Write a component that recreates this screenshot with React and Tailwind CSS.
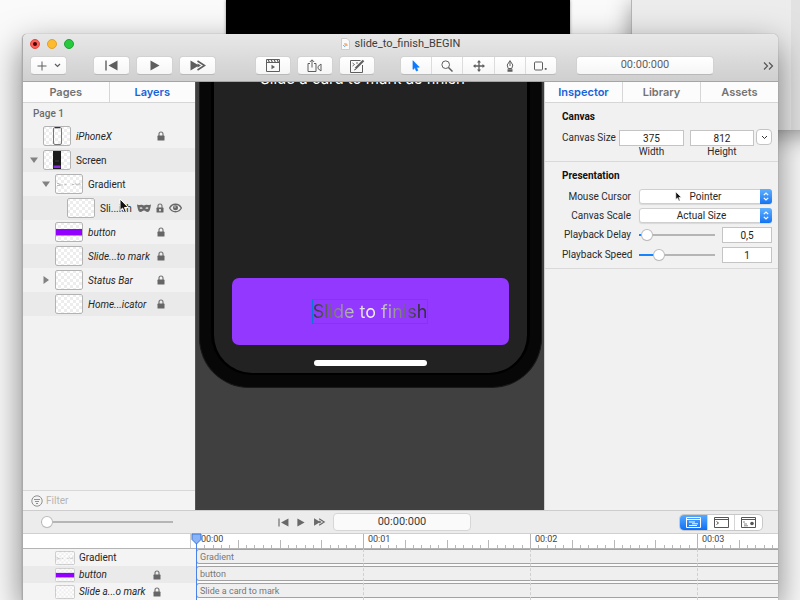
import React from "react";

const toolButton =
  "flex h-[19px] shrink-0 items-center justify-center rounded-[4px] border border-[#d2d2d2] border-b-[#b9b9b9] bg-gradient-to-b from-white to-[#f6f6f6] text-[#5e5e5e]";
const rangeBase =
  "h-[12px] shrink-0 appearance-none bg-no-repeat bg-center bg-[length:100%_2px] [&::-webkit-slider-thumb]:appearance-none [&::-webkit-slider-thumb]:size-[10px] [&::-webkit-slider-thumb]:rounded-full [&::-webkit-slider-thumb]:bg-white [&::-webkit-slider-thumb]:shadow-[0_0_0_1px_#bdbdbd,0_1px_1px_#00000033]";
const field =
  "h-[16px] border border-[#c4c4c4] bg-white text-center text-[10px] leading-[14px] text-[#222] outline-none";

function Lock({ locked = true }) {
  return (
    <svg width="8" height="10" viewBox="0 0 8 10" fill="none">
      <path d="M2 5V3a2 2 0 0 1 4 0v2" stroke="#707070" strokeWidth="1.1" />
      <rect x="0.5" y="4.6" width="7" height="5" rx="0.6" fill="#666" />
      {!locked && <rect x="3.2" y="6" width="1.6" height="2.2" fill="#eee" />}
    </svg>
  );
}

function Mask() {
  return (
    <svg width="14" height="9" viewBox="0 0 14 9">
      <path
        fillRule="evenodd"
        fill="#686868"
        d="M0 .6c2 .9 3.300-.2 5 .2.8.2 1.100.6 2 .6s1.200-.4 2-.6c1.700-.4 3 .7 5-.2-.2 1.700-.5 3-.9 4.400C12.700 6.900 11.800 8 10.500 8 9 8 8.300 6.500 7 6.500S5 8 3.500 8C2.200 8 1.300 6.900.9 5 .5 3.600.2 2.300 0 .6ZM2.500 4c.6-1.100 2.400-1.100 3.200.2-.8.9-2.600.9-3.200-.2Zm9 0c-.6-1.100-2.400-1.100-3.200.2.8.9 2.600.9 3.200-.2Z"
      />
    </svg>
  );
}

function Eye() {
  return (
    <svg width="13" height="10" viewBox="0 0 13 10" fill="none">
      <path d="M.6 5C3.200 0 9.800 0 12.400 5 9.800 10 3.200 10 .6 5Z" stroke="#686868" strokeWidth="1.300" />
      <circle cx="6.500" cy="4.800" r="2.500" fill="#686868" />
      <circle cx="6" cy="4" r=".7" fill="#eee" />
    </svg>
  );
}

function Cursor({ className, width = 10, height = 16, fill = "#111", outline = "#fff" }) {
  return (
    <svg className={className} width={width} height={height} viewBox="0 0 10 16">
      <path
        d="M1 1v11.500l2.600-2.400 1.900 4.600 1.900-.8-1.900-4.400H9.300Z"
        fill={fill}
        stroke={outline}
        strokeWidth="1"
      />
    </svg>
  );
}

function Thumb({ kind, small }) {
  return (
    <svg
      className="shrink-0 rounded-[2px]"
      width={small ? 20 : 28}
      height={small ? 14 : 20}
      viewBox="0 0 28 20"
      preserveAspectRatio="none"
    >
      <defs>
        <pattern id="checks" width="6" height="6" patternUnits="userSpaceOnUse">
          <rect width="6" height="6" fill="#fff" />
          <rect width="3" height="3" fill="#ededed" />
          <rect x="3" y="3" width="3" height="3" fill="#ededed" />
        </pattern>
      </defs>
      <rect width="28" height="20" fill="url(#checks)" />
      {kind === "phone" && (
        <>
          <rect x="10.500" y="1.500" width="8" height="17" rx="1.500" fill="none" stroke="#777" strokeWidth="1" />
          <path d="M12 1.500h5" stroke="#333" strokeWidth="1.500" />
        </>
      )}
      {kind === "screen" && (
        <>
          <rect x="10" y="1" width="8" height="18" fill="#191919" />
          <rect x="10.500" y="15.500" width="7" height="2.500" fill="#8a2be8" />
          <path d="M12 11h4" stroke="#555" strokeWidth=".6" />
        </>
      )}
      {kind === "gradient" && (
        <path
          d="M2 9.500h2l1 1.500h3M9.500 10.500h2M17 10.500h2l1-1 2 1.500 3-1.500v2M2 11.500h3"
          fill="none"
          stroke="#bdbdbd"
          strokeWidth="1"
        />
      )}
      {kind === "button" && <rect x="1" y="7" width="26" height="6.500" fill="#9100ff" />}
      <rect x=".5" y=".5" width="27" height="19" rx="1.500" fill="none" stroke="#b3b3b3" />
    </svg>
  );
}

const layers = [
  { name: "iPhoneX", kind: "phone", italic: true, pad: "pl-[20px]", lock: true },
  { name: "Screen", kind: "screen", pad: "pl-[7px]", open: true },
  { name: "Gradient", kind: "gradient", pad: "pl-[19px]", open: true },
  { name: "Sli...ish", pad: "pl-[44px]", hover: true },
  { name: "button", kind: "button", italic: true, pad: "pl-[32px]", lock: true },
  { name: "Slide...to mark", italic: true, pad: "pl-[32px]", lock: true },
  { name: "Status Bar", italic: true, pad: "pl-[19px]", closed: true, lock: true },
  { name: "Home...icator", italic: true, pad: "pl-[32px]", lock: true },
];

function LayerRow({ layer }) {
  return (
    <li className={`flex h-[24px] items-center even:bg-[#eaeaea] ${layer.pad}`}>
      {(layer.open || layer.closed) && (
        <button className="mr-[5px] flex w-[8px] justify-center" aria-label={layer.name}>
          <svg width="8" height="8" viewBox="0 0 8 8">
            <path d={layer.open ? "M0 1.500h8L4 7Z" : "M1.500 0v8L7 4Z"} fill="#828282" />
          </svg>
        </button>
      )}
      <Thumb kind={layer.kind} />
      <span className={`ml-[5px] grow whitespace-nowrap text-[10px] text-[#262626] ${layer.italic ? "italic" : ""}`}>
        {layer.name}
      </span>
      {layer.hover && (
        <div className="flex items-center gap-[5px] pr-[13px]">
          <button aria-label="Mask"><Mask /></button>
          <button aria-label="Lock"><Lock locked={false} /></button>
          <button aria-label="Visible"><Eye /></button>
        </div>
      )}
      {layer.lock && (
        <button className="mr-[30px]" aria-label="Locked"><Lock /></button>
      )}
    </li>
  );
}

function Rewind({ size = 11 }) {
  return (
    <svg width={size + 2} height={size} viewBox="0 0 13 11">
      <path d="M1 .5v10" stroke="currentColor" strokeWidth="1.400" />
      <path d="M12.500 .5v10L3.500 5.500Z" fill="currentColor" />
    </svg>
  );
}

function Play({ size = 11 }) {
  return (
    <svg width={size - 1} height={size} viewBox="0 0 10 11">
      <path d="M.5.500v10L9.500 5.500Z" fill="currentColor" />
    </svg>
  );
}

function FastForward({ size = 11 }) {
  return (
    <svg width={size + 5} height={size} viewBox="0 0 16 11">
      <path d="M.5.500v10L9 5.500Z" fill="currentColor" />
      <path d="M7.500 1l7 4.500-7 4.500" stroke="currentColor" strokeWidth="1.600" fill="none" />
      <path d="M7.500 3.500v4l3.500-2Z" fill="currentColor" />
    </svg>
  );
}

function Toolbar() {
  return (
    <header className="h-[48px] shrink-0 rounded-t-[5px] border-b border-[#a5a5a5] bg-gradient-to-b from-[#e8e8e8] to-[#cfcfcf]">
      <div className="grid h-[20px] grid-cols-3 items-center">
        <div className="flex gap-[7px] pl-[7px]">
          <button className="flex size-[10px] items-center justify-center rounded-full border border-[#de4a42] bg-[#fb5f57]" aria-label="Close">
            <span className="size-[4px] rounded-full bg-[#4d0000]" />
          </button>
          <button className="size-[10px] rounded-full border border-[#e0a02c] bg-[#fdbc2f]" aria-label="Minimize" />
          <button className="size-[10px] rounded-full border border-[#1fa32f] bg-[#27c93f]" aria-label="Zoom" />
        </div>
        <h1 className="flex items-center justify-center gap-[5px] text-[11px] leading-[14px] text-[#3d3d3d]">
          <svg width="9" height="12" viewBox="0 0 9 12">
            <path d="M.5.500h5.500l2.500 2.500v8.500h-8Z" fill="#fafafa" stroke="#c4c4c4" strokeWidth=".8" />
            <path d="M3 5l3 .5 1 2-3 1Z" fill="#f3b37c" />
            <path d="M2 7l2 2" stroke="#78b6e3" />
          </svg>
          slide_to_finish_BEGIN
        </h1>
      </div>
      <div className="flex items-center pl-[7px] pt-[2px]">
        <button className={`${toolButton} w-[37px] gap-[7px]`} aria-label="Add">
          <svg width="10" height="10" viewBox="0 0 10 10"><path d="M5 .5v9M.5 5h9" stroke="currentColor" strokeWidth="1" /></svg>
          <svg width="7" height="5" viewBox="0 0 7 5"><path d="M1 1l2.500 2.500L6 1" stroke="currentColor" fill="none" strokeWidth="1.200" /></svg>
        </button>
        <div className="ml-[26px] flex gap-[6px]">
          <button className={`${toolButton} w-[37px]`} aria-label="Rewind"><Rewind /></button>
          <button className={`${toolButton} w-[37px]`} aria-label="Play"><Play /></button>
          <button className={`${toolButton} w-[37px]`} aria-label="Fast forward"><FastForward /></button>
        </div>
        <div className="ml-[39px] flex gap-[6px]">
          <button className={`${toolButton} w-[36px]`} aria-label="Preview">
            <svg width="14" height="13" viewBox="0 0 14 13" fill="none" stroke="currentColor">
              <path d="M.5.500h13v12H.5ZM.5 3.500h13" />
              <path d="M2 .5l1.500 3M5 .5l1.500 3M8 .5l1.500 3M11 .5l1.500 3" strokeWidth="1.200" />
              <path d="M5.500 5.800v4.500L9 8Z" fill="currentColor" stroke="none" />
            </svg>
          </button>
          <button className={`${toolButton} w-[36px]`} aria-label="Export video">
            <svg width="16" height="13" viewBox="0 0 16 13" fill="none" stroke="currentColor">
              <path d="M3 4.500H1v8h8v-8H7M5 8.500V1M2.800 3L5 .8 7.200 3" />
              <path d="M11 7.500l3-2.500v7l-3-2.500Z" />
            </svg>
          </button>
          <button className={`${toolButton} w-[36px]`} aria-label="Edit">
            <svg width="15" height="14" viewBox="0 0 15 14" fill="none" stroke="currentColor">
              <path d="M10.500 1.500h-10v12h12V6" />
              <path d="M5.500 9.500L13.500 1.500" strokeWidth="2.200" />
              <path d="M4 11l2-.7M2.500 4l2 1.500-2 1.500M6 4h2" strokeWidth=".9" />
            </svg>
          </button>
        </div>
        <div className={`${toolButton} ml-[25px] w-[157px] divide-x divide-[#dcdcdc]`}>
          <button className="flex h-full flex-1 items-center justify-center" aria-label="Select">
            <Cursor width={8} height={12} fill="#0a7aff" outline="#0a7aff" />
          </button>
          <button className="flex h-full flex-1 items-center justify-center" aria-label="Magnify">
            <svg width="12" height="12" viewBox="0 0 12 12" fill="none" stroke="currentColor"><circle cx="4.700" cy="4.700" r="3.800" /><path d="M7.500 7.500l4 4" strokeWidth="1.500" /></svg>
          </button>
          <button className="flex h-full flex-1 items-center justify-center" aria-label="Move">
            <svg width="12" height="12" viewBox="0 0 12 12">
              <path d="M6 1v10M1 6h10" stroke="currentColor" strokeWidth="1.300" />
              <path d="M6 0l2 2.500H4ZM6 12l2-2.500H4ZM0 6l2.500-2v4ZM12 6L9.500 4v4Z" fill="currentColor" />
            </svg>
          </button>
          <button className="flex h-full flex-1 items-center justify-center" aria-label="Pen">
            <svg width="8" height="12" viewBox="0 0 8 12" fill="none" stroke="currentColor">
              <path d="M4 .6L1.200 5l1 3.500h3.600l1-3.500Z" /><path d="M4 2v4" /><path d="M1.500 10.500h5" strokeWidth="2.500" />
            </svg>
          </button>
          <button className="flex h-full flex-1 items-center justify-center" aria-label="Shape">
            <svg width="13" height="10" viewBox="0 0 13 10"><rect x=".5" y="1" width="8" height="8" rx="1" fill="none" stroke="currentColor" /><rect x="10.800" y="7" width="1.800" height="1.800" fill="currentColor" /></svg>
          </button>
        </div>
        <output className={`${toolButton} ml-[19px] w-[138px] text-[11px] text-[#3c3c3c]`}>00:00:000</output>
        <button className="ml-auto mr-[4px] text-[#555]" aria-label="More">
          <svg width="11" height="8" viewBox="0 0 11 8" fill="none" stroke="currentColor" strokeWidth="1.200"><path d="M1 .5L4.500 4 1 7.500M6 .5L9.500 4 6 7.500" /></svg>
        </button>
      </div>
    </header>
  );
}

function Tabs({ names, active }) {
  return (
    <nav className="flex h-[21px] shrink-0 divide-x divide-[#d6d6d6] border-b border-[#d6d6d6] bg-[#fcfcfc] font-[Inter,sans-serif] text-[11px] font-semibold">
      {names.map((n) => (
        <button key={n} className={`flex-1 ${n === active ? "text-[#1763d8]" : "text-[#737373]"}`}>{n}</button>
      ))}
    </nav>
  );
}

function Sidebar() {
  return (
    <aside className="relative flex w-[172px] shrink-0 flex-col bg-[#f2f2f2]">
      <Tabs names={["Pages", "Layers"]} active="Layers" />
      <h2 className="pl-[10px] text-[10px] font-medium leading-[21px] text-[#6b6b6b]">Page 1</h2>
      <ul>{layers.map((l) => <LayerRow key={l.name} layer={l} />)}</ul>
      <Cursor className="absolute left-[96px] top-[116px]" />
      <label className="mt-auto flex h-[20px] items-center gap-[3px] border-t border-[#d8d8d8] bg-[#f4f4f4] pl-[8px]">
        <svg width="12" height="12" viewBox="0 0 12 12" fill="none" stroke="#8f8f8f">
          <circle cx="6" cy="6" r="5.200" /><path d="M3 4.500h6M4 6.500h4M5 8.500h2" />
        </svg>
        <input className="w-[120px] bg-transparent text-[10px] outline-none placeholder:text-[#b5b5b5]" placeholder="Filter" />
      </label>
    </aside>
  );
}

function Canvas() {
  return (
    <main className="min-w-0 flex-1 overflow-hidden border-l border-[#555] bg-[#404040] font-[Inter,sans-serif]">
      <div className="mx-auto flex h-[306px] w-[343px] flex-col rounded-b-[50px] border-x border-b border-[#191919] bg-[#070707] px-[11px] pb-[12px]">
        <div className="flex grow flex-col rounded-b-[41px] bg-black px-[3px] pb-[2px]">
          <div className="flex grow flex-col items-center rounded-b-[38px] bg-[#222] px-[18px] pb-[7px]">
            <p className="-mt-[13px] pr-[15px] text-[15px] leading-[20px] text-white">Slide a card to mark as finish</p>
            <button className="mt-auto flex h-[67px] w-full items-center justify-center rounded-[7px] bg-[#9338ff]">
              <span className="border border-[#0a78d6]">
                <span className="block bg-[linear-gradient(90deg,#333_0%,#555_10%,#aaa_30%,#fff_50%,#aaa_68%,#333_92%)] bg-clip-text text-[18px] leading-[23px] text-transparent">
                  Slide to finish
                </span>
              </span>
            </button>
            <div className="mt-[15px] h-[6px] w-[113px] rounded-full bg-white" />
          </div>
        </div>
      </div>
    </main>
  );
}

function Popup({ id, label, value, pointer }) {
  return (
    <>
      <label htmlFor={id} className="text-right">{label}</label>
      <div className="relative">
        <select
          id={id}
          className={`block h-[15px] w-full appearance-none rounded-[3px] border border-[#cfcfcf] bg-white pr-[8px] text-center [text-align-last:center] text-[10px] leading-[13px] text-[#262626] shadow-[0_1px_1px_#0000001a] ${pointer ? "pl-[8px]" : ""}`}
        >
          <option>{value}</option>
        </select>
        {pointer && <Cursor className="pointer-events-none absolute left-[36px] top-[2px]" width={7} height={11} />}
        <span className="pointer-events-none absolute right-0 top-0 flex h-[15px] w-[12px] items-center justify-center rounded-r-[3px] bg-gradient-to-b from-[#5fb0ff] to-[#0f73f3]">
          <svg width="6" height="9" viewBox="0 0 6 9" fill="none" stroke="#fff" strokeWidth="1.200"><path d="M.8 3.200L3 1l2.200 2.200M.8 5.800L3 8l2.200-2.200" /></svg>
        </span>
      </div>
    </>
  );
}

function Inspector() {
  return (
    <aside className="w-[234px] shrink-0 border-l border-[#d0d0d0] bg-[#f1f1f1] text-[10px] leading-[12px] text-[#2b2b2b]">
      <Tabs names={["Inspector", "Library", "Assets"]} active="Inspector" />
      <section className="border-b border-[#d9d9d9] pb-[3px] pl-[17px] pr-[6px] pt-[8px]">
        <h2 className="font-bold text-[#111]">Canvas</h2>
        <div className="mt-[6px] flex items-start">
          <span className="w-[57px] whitespace-nowrap leading-[18px]">Canvas Size</span>
          <div className="flex flex-col items-center">
            <input id="width" className={`${field} mt-[1px] w-[65px]`} defaultValue="375" />
            <label htmlFor="width">Width</label>
          </div>
          <div className="ml-[6px] flex flex-col items-center">
            <input id="height" className={`${field} mt-[1px] w-[64px]`} defaultValue="812" />
            <label htmlFor="height">Height</label>
          </div>
          <button className="ml-auto flex size-[16px] items-center justify-center rounded-[4px] border border-[#c4c4c4] bg-white" aria-label="Presets">
            <svg width="7" height="5" viewBox="0 0 7 5" fill="none" stroke="#333"><path d="M1 1l2.500 2.500L6 1" /></svg>
          </button>
        </div>
      </section>
      <section className="border-b border-[#d9d9d9] pb-[5px] pl-[17px] pr-[6px] pt-[8px]">
        <h2 className="font-bold text-[#111]">Presentation</h2>
        <div className="mt-[7px] grid grid-cols-[69px_1fr] items-center gap-x-[8px] gap-y-[4px]">
          <Popup id="mouse" label="Mouse Cursor" value="Pointer" pointer />
          <Popup id="scale" label="Canvas Scale" value="Actual Size" />
          <label htmlFor="delay" className="whitespace-nowrap text-right">Playback Delay</label>
          <div className="flex items-center justify-between">
            <input id="delay" type="range" defaultValue="4" className={`${rangeBase} w-[76px] bg-[linear-gradient(90deg,#1684fb_8%,#b5b5b5_8%)]`} />
            <input aria-label="Delay" className={`${field} w-[50px]`} defaultValue="0,5" />
          </div>
          <label htmlFor="speed" className="whitespace-nowrap text-right">Playback Speed</label>
          <div className="flex items-center justify-between">
            <input id="speed" type="range" defaultValue="22" className={`${rangeBase} w-[76px] bg-[linear-gradient(90deg,#1684fb_24%,#b5b5b5_24%)]`} />
            <input aria-label="Speed" className={`${field} w-[50px]`} defaultValue="1" />
          </div>
        </div>
      </section>
    </aside>
  );
}

const tracks = [
  { name: "Gradient", bar: "Gradient", kind: "gradient" },
  { name: "button", bar: "button", kind: "button", lock: true },
  { name: "Slide a...o mark", bar: "Slide a card to mark", lock: true },
];
const seconds = ["00:00", "00:01", "00:02", "00:03"];

function Ticks() {
  return (
    <svg className="absolute bottom-0 left-0" width="167" height="9">
      {Array.from({ length: 19 }, (_, i) => {
        const x = Math.round(((i + 1) * 167) / 20) - 0.5;
        return <path key={i} d={`M${x} ${(i + 1) % 5 ? 6 : 1}V9`} stroke="#b8b8b8" />;
      })}
    </svg>
  );
}

function Timeline() {
  return (
    <section className="h-[90px] shrink-0 overflow-hidden border-t border-[#cdcdcd] bg-[#ececec]">
      <div className="flex h-[22px] items-center pl-[18px] text-[#686868]">
        <input aria-label="Timeline zoom" type="range" defaultValue="1" className={`${rangeBase} w-[132px] bg-[linear-gradient(90deg,#1684fb_4%,#b5b5b5_4%)]`} />
        <div className="ml-[105px] flex items-center gap-[8px]">
          <button aria-label="Rewind"><Rewind size={9} /></button>
          <button aria-label="Play"><Play size={9} /></button>
          <button aria-label="Fast forward"><FastForward size={8} /></button>
        </div>
        <output className="ml-[7px] flex h-[18px] w-[138px] items-center justify-center rounded-[4px] border border-[#d6d6d6] bg-[#fafafa] text-[11px] text-[#3c3c3c]">00:00:000</output>
        <div className="ml-auto mr-[16px] flex h-[15px] w-[82px] divide-x divide-[#d5d5d5] overflow-hidden rounded-[4px] bg-white text-[#555] shadow-[0_0_0_1px_#c8c8c8]">
          <button className="flex flex-1 items-center justify-center bg-gradient-to-b from-[#55a9ff] to-[#0a6ff5] text-white" aria-label="Timeline">
            <svg width="15" height="11" viewBox="0 0 15 11" fill="none" stroke="currentColor"><path d="M.5.500h14v10H.5ZM.5 2.500h14M3 5h6M6 6.800h6M3 8.500h8" /></svg>
          </button>
          <button className="flex flex-1 items-center justify-center" aria-label="Console">
            <svg width="15" height="11" viewBox="0 0 15 11" fill="none" stroke="currentColor"><path d="M.5.500h14v10H.5ZM.5 2.500h14M2.500 4.500L4.500 6l-2 1.500" /></svg>
          </button>
          <button className="flex flex-1 items-center justify-center" aria-label="Events">
            <svg width="15" height="11" viewBox="0 0 15 11" fill="none" stroke="currentColor"><path d="M.5.500h14v10H.5ZM.5 2.500h14" /><path d="M2 5h2M3 7h3M3 8.800h4" strokeWidth=".7" /><circle cx="11" cy="6.500" r="1.800" fill="currentColor" stroke="none" /></svg>
          </button>
        </div>
      </div>
      <div className="relative">
        <div className="flex h-[16px] overflow-hidden border-y border-b-[#b4b4b4] border-t-[#d0d0d0] bg-white">
          <div className="mr-[5px] w-[168px] shrink-0 border-r border-[#ccc]" />
          {seconds.map((s) => (
            <div key={s} className="relative w-[167px] shrink-0 border-l border-[#b5b5b5] pl-[4px] text-[9px] leading-[11px] text-[#444]">
              {s}
              <Ticks />
            </div>
          ))}
        </div>
        {tracks.map((t) => (
          <div key={t.name} className="group flex h-[17px] overflow-hidden">
            <div className="flex w-[173px] shrink-0 items-center bg-[#f4f4f4] pl-[32px] group-odd:bg-[#eaeaea]">
              <Thumb kind={t.kind} small />
              <span className={`ml-[4px] grow whitespace-nowrap text-[10px] text-[#262626] ${t.lock ? "italic" : ""}`}>{t.name}</span>
              {t.lock && <button className="mr-[35px]" aria-label="Locked"><Lock /></button>}
            </div>
            <div className="flex min-w-0 flex-1 items-start bg-[#fafafa]">
              <div className="h-[15px] grow rounded-l-[3px] border-y border-l border-[#a2a2a2] bg-[#efefef] pl-[3px] text-[9px] leading-[14px] text-[#777]">{t.bar}</div>
            </div>
          </div>
        ))}
        <div className="pointer-events-none absolute inset-x-0 bottom-0 top-[16px] flex overflow-hidden pl-[173px]">
          {seconds.map((s) => (
            <div key={s} className="w-[167px] shrink-0 border-l border-dashed border-[#d0d0d0]" />
          ))}
        </div>
        <svg className="absolute left-[168px] top-0" width="11" height="70" viewBox="0 0 11 70">
          <path d="M5.500 10v60" stroke="#4a83e8" />
          <path d="M1 1h9v5.500L5.500 11 1 6.500Z" fill="#8ab4f5" stroke="#3c74d6" />
        </svg>
      </div>
    </section>
  );
}

export default function App() {
  return (
    <div className="relative flex h-screen min-w-[800px] overflow-hidden bg-[#fafafa] font-[Roboto,'Liberation_Sans',sans-serif]">
      <div className="absolute left-[226px] top-0 h-[200px] w-[344px] bg-black shadow-[0_0_3px_#00000066]" />
      <div className="absolute -right-[40px] top-0 flex h-[131px] w-[209px] justify-end border-b border-l border-[#b4b4b4] bg-[#ececec] shadow-[0_4px_22px_#00000066]">
        <div className="w-[49px] bg-[#e2e2e2]" />
      </div>
      <div className="relative ml-[22px] mr-[22px] mt-[34px] flex min-w-0 flex-1 flex-col rounded-t-[5px] border-l border-[#a9a9a9] shadow-[0_12px_34px_#00000080,0_0_1px_#00000080]">
        <Toolbar />
        <div className="flex min-h-0 flex-1">
          <Sidebar />
          <Canvas />
          <Inspector />
        </div>
        <Timeline />
      </div>
    </div>
  );
}
